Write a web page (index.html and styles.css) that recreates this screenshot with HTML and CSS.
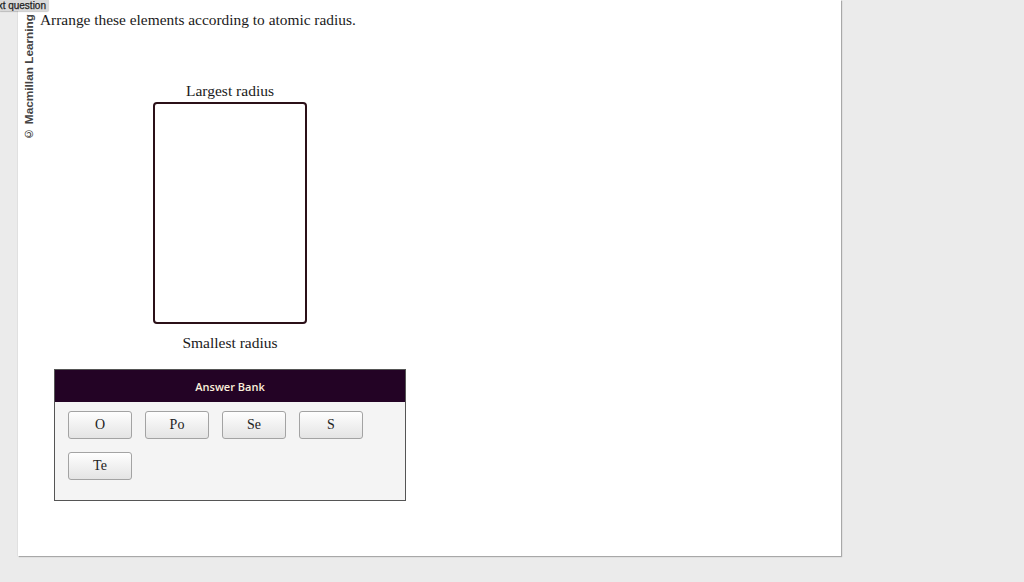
FILE: index.html
```html
<!DOCTYPE html>
<html>
<head>
<meta charset="utf-8">
<link rel="stylesheet" href="styles.css">
</head>
<body>
<div class="panel">
  <div class="tab"><span>Next question</span></div>
  <div class="credit"><span>© Macmillan Learning</span></div>
  <div class="content">
    <p class="prompt">Arrange these elements according to atomic radius.</p>
    <div class="sorter">
      <div class="label">Largest radius</div>
      <div class="dropbox"></div>
      <div class="label">Smallest radius</div>
    </div>
    <div class="bank">
      <div class="bank-head">Answer Bank</div>
      <div class="bank-body">
        <div class="chip">O</div>
        <div class="chip">Po</div>
        <div class="chip">Se</div>
        <div class="chip">S</div>
        <div class="chip">Te</div>
      </div>
    </div>
  </div>
</div>
</body>
</html>
```
FILE: styles.css
```css
html, body {
  margin: 0;
  padding: 0;
}
body {
  background: #ebebeb;
  width: 1024px;
  height: 582px;
  overflow: hidden;
  font-family: "Liberation Serif", "Times New Roman", serif;
}
.panel {
  position: relative;
  margin-left: 18px;
  width: 823px;
  height: 556px;
  background: #ffffff;
  box-shadow: 0 0 1px rgba(0,0,0,0.25), 1px 1px 1px rgba(0,0,0,0.25);
  display: flex;
}
.tab {
  position: absolute;
  left: -18px;
  top: 0;
  width: 49px;
  height: 11px;
  overflow: hidden;
  display: flex;
  justify-content: flex-end;
  background: #d9d9d9;
  border-bottom-right-radius: 2px;
  box-shadow: 0 1px 1px rgba(0,0,0,0.2);
}
.tab span {
  flex: none;
  padding-right: 3px;
  font-family: "Liberation Sans", Arial, sans-serif;
  font-size: 10px;
  font-weight: normal;
  -webkit-text-stroke: 0.25px #222;
  line-height: 11px;
  color: #222;
  white-space: nowrap;
}
.credit {
  width: 22px;
  flex: none;
  display: flex;
  justify-content: center;
  align-items: flex-start;
  padding-top: 14px;
}
.credit span {
  writing-mode: vertical-rl;
  transform: rotate(180deg);
  font-family: "Liberation Sans", Arial, sans-serif;
  font-size: 11.8px;
  font-weight: bold;
  color: #444;
  line-height: 14px;
  white-space: nowrap;
}
.content {
  flex: 1;
  padding-top: 11px;
}
.prompt {
  margin: 0;
  font-size: 15.4px;
  line-height: 17px;
  color: #1a1a1a;
}
.sorter {
  margin-left: 113px;
  margin-top: 54px;
  width: 154px;
  display: flex;
  flex-direction: column;
  align-items: center;
}
.label {
  font-size: 15.5px;
  line-height: 17px;
  color: #1a1a1a;
  white-space: nowrap;
}
.dropbox {
  margin-top: 3px;
  box-sizing: border-box;
  width: 154px;
  height: 222px;
  border: 2px solid #2b1018;
  border-radius: 4px;
  margin-bottom: 10px;
}
.bank {
  margin-left: 14px;
  margin-top: 18px;
  width: 352px;
  box-sizing: border-box;
  border: 1px solid #555;
  background: #f4f4f4;
}
.bank-head {
  height: 32px;
  background: #230325;
  color: #fbf0dc;
  font-family: "Open Sans", "Noto Sans", sans-serif;
  font-size: 11px;
  font-weight: 600;
  line-height: 33px;
  text-align: center;
}
.bank-body {
  display: flex;
  flex-wrap: wrap;
  gap: 13px;
  padding: 9px 13px 20px 13px;
}
.chip {
  box-sizing: border-box;
  width: 64px;
  height: 28px;
  border: 1px solid #a3a3a3;
  border-radius: 3px;
  background: linear-gradient(#fefefe, #e4e4e4);
  font-size: 14px;
  line-height: 26px;
  text-align: center;
  color: #222;
}
```
